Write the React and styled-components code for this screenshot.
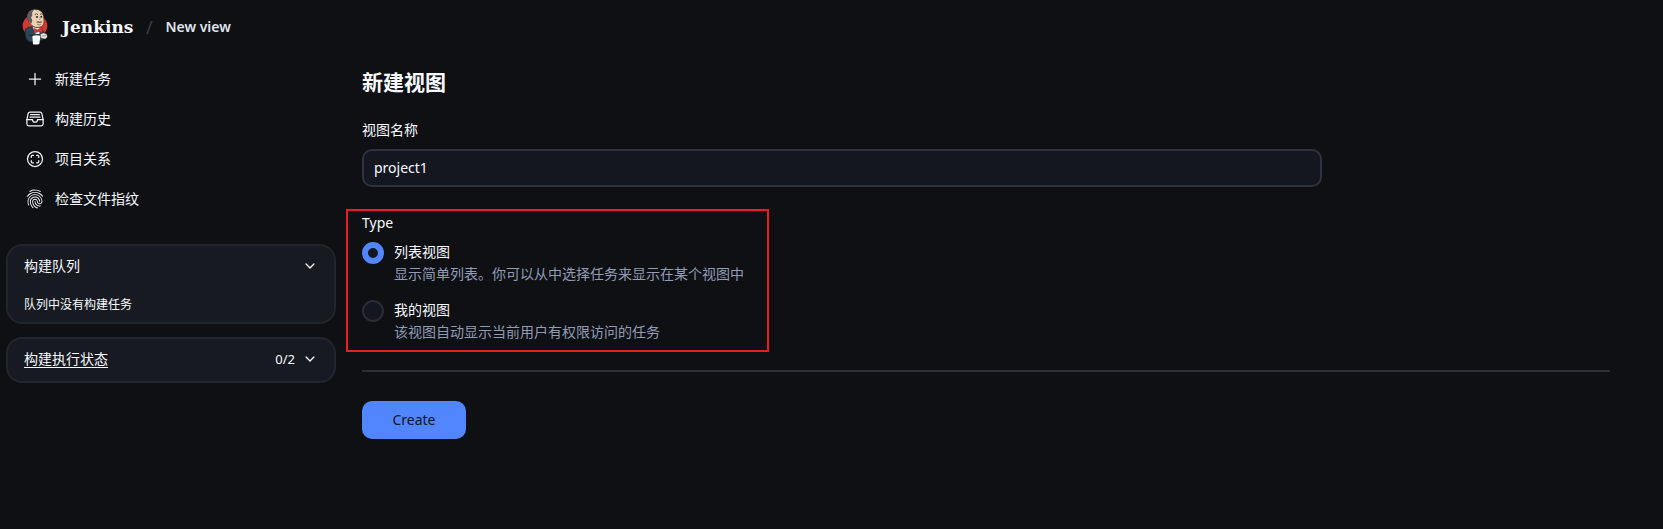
import React, { useState } from "react";
import styled, { createGlobalStyle } from "styled-components";
import {
  IoAddOutline,
  IoChevronDownOutline,
  IoFileTrayFullOutline,
  IoFingerPrintOutline,
  IoScanCircleOutline,
} from "react-icons/io5";

const GlobalStyle = createGlobalStyle`
  * {
    box-sizing: border-box;
  }

  body {
    margin: 0;
    background-color: #0f1014;
    color: #f8faff;
    font-family: "Noto Sans", "Noto Sans CJK SC", sans-serif;
    font-size: 14px;
    line-height: 20px;
  }

  button,
  input {
    font: inherit;
    color: inherit;
  }

  a {
    color: inherit;
    text-decoration: none;
  }
`;

const Header = styled.header`
  display: flex;
  align-items: center;
  height: 54px;
  padding: 0 22px;
`;

const HomeLink = styled.a`
  display: flex;
  align-items: center;
  gap: 14px;
  font-family: "DejaVu Serif", serif;
  font-size: 17px;
  font-weight: 700;
`;

const Separator = styled.span`
  width: 32px;
  text-align: center;
  font-size: 18px;
  color: #3a3e4a;
`;

const Crumb = styled.a`
  font-size: 14px;
  font-weight: 600;
  color: #dfe3ec;
`;

const Layout = styled.div`
  display: grid;
  grid-template-columns: 342px 1fr;
`;

const Sidebar = styled.aside`
  padding: 5px 6px;
`;

const Tasks = styled.nav`
  display: flex;
  flex-direction: column;
  margin-bottom: 25px;
`;

const TaskLink = styled.a`
  display: flex;
  align-items: center;
  gap: 10px;
  height: 40px;
  padding: 0 19px;

  svg {
    width: 20px;
    height: 20px;
    color: #f0f2f8;
  }
`;

const Card = styled.section`
  margin-bottom: 13px;
  border: 2px solid #21252d;
  border-radius: 16px;
  background-color: #171a21;
`;

const CardHeader = styled.div`
  display: flex;
  align-items: center;
  height: 42px;
  padding: 0 17px 2px 16px;
`;

const CardTitle = styled.a`
  margin-right: auto;
  text-decoration: ${(props) => (props.$underlined ? "underline" : "none")};
  text-underline-offset: 3px;
`;

const CardCount = styled.span`
  font-size: 13px;
`;

const CollapseButton = styled.button`
  display: flex;
  margin-left: 8px;
  padding: 0;
  border: 0;
  background: none;

  svg {
    width: 14px;
    height: 14px;
  }
`;

const CardBody = styled.div`
  padding: 7px 16px;
  font-size: 12px;
`;

const Main = styled.main`
  padding: 15px 53px 16px 20px;
`;

const Title = styled.h1`
  margin: 0 0 25px;
  font-size: 21px;
  line-height: 26px;
  font-weight: 700;
`;

const FieldLabel = styled.label`
  display: block;
  margin-bottom: 9px;
`;

const TextInput = styled.input`
  display: block;
  width: 100%;
  max-width: 960px;
  height: 38px;
  padding: 0 10px 2px;
  border: 2px solid #2f333d;
  border-radius: 10px;
  background-color: #14171f;
  outline: none;
`;

const Highlight = styled.div`
  width: fit-content;
  margin: 22px 0 18px -16px;
  padding: 2px 23px 6px 14px;
  border: 2px solid #ed1c24;
`;

const TypeGroup = styled.fieldset`
  display: flex;
  flex-direction: column;
  gap: 14px;
  margin: 0;
  padding: 0;
  border: 0;
`;

const TypeLegend = styled.legend`
  padding: 0;
  margin-bottom: 9px;
`;

const Option = styled.label`
  display: flex;
  gap: 10px;
`;

const Radio = styled.input`
  appearance: none;
  flex: none;
  width: 22px;
  height: 22px;
  margin: 0;
  border: 2px solid #2a2d36;
  border-radius: 50%;
  background-color: #14171f;

  &:checked {
    border: 6px solid #5286ff;
  }
`;

const OptionName = styled.span`
  display: block;
`;

const OptionHelp = styled.span`
  display: block;
  line-height: 24px;
  color: #929cb6;
`;

const Divider = styled.hr`
  height: 2px;
  margin: 0 0 29px;
  border: 0;
  background-color: #2c2e38;
`;

const CreateButton = styled.button`
  min-width: 104px;
  height: 38px;
  padding: 0 16px;
  border: 0;
  border-radius: 10px;
  background-color: #5286ff;
  color: #10141f;
`;

const tasks = [
  { name: "新建任务", icon: IoAddOutline },
  { name: "构建历史", icon: IoFileTrayFullOutline },
  { name: "项目关系", icon: IoScanCircleOutline },
  { name: "检查文件指纹", icon: IoFingerPrintOutline },
];

const viewTypes = [
  {
    id: "list",
    name: "列表视图",
    help: "显示简单列表。你可以从中选择任务来显示在某个视图中",
  },
  {
    id: "my",
    name: "我的视图",
    help: "该视图自动显示当前用户有权限访问的任务",
  },
];

function JenkinsLogo() {
  return (
    <svg width="26" height="36" viewBox="66 26 78 108" aria-hidden="true">
      <ellipse cx="105" cy="76" rx="37" ry="34" fill="#d33833" />
      <path d="M76 86 Q88 78 98 80 L128 90 Q134 98 130 119 L90 125 Q77 120 76 106 Z" fill="#2c4756" stroke="#14222b" strokeWidth="2" />
      <path d="M98 80 L106 100 L118 102 L121 84 Z" fill="#e9edf0" />
      <path d="M83 52 Q80 30 104 27 Q128 27 131 48 L132 64 Q132 77 119 81 Q104 84 96 76 Q86 68 83 52 Z" fill="#ebd0b2" stroke="#2b2320" strokeWidth="2" />
      <path d="M83 56 Q76 34 102 28 Q94 36 97 46 L93 51 L97 60 L94 70 Q84 64 83 56 Z" fill="#5c5a5c" />
      <path d="M104 43 Q109 38 114 43 M120 42 Q125 38 129 43" fill="none" stroke="#5b5049" strokeWidth="3" />
      <circle cx="111" cy="50" r="3" fill="#231f20" />
      <circle cx="124" cy="49" r="3" fill="#231f20" />
      <path d="M118 50 Q124 56 118 59" fill="none" stroke="#a57f63" strokeWidth="2" />
      <path d="M108 66 Q114 60 119 64 Q124 61 127 66 Q118 70 108 66 Z" fill="#6f5548" />
      <path d="M112 72 Q118 76 123 71" fill="none" stroke="#8c3b35" strokeWidth="2" />
      <path d="M101 84 L112 88 L127 81 L128 97 L114 94 L104 99 Z" fill="#d33833" stroke="#811c18" strokeWidth="1" />
      <path d="M86 103 Q100 109 122 102" fill="none" stroke="#14222b" strokeWidth="3" />
      <path d="M97 107 Q108 103 121 106 L118 131 Q110 134 99 132 Z" fill="#fff" />
      <path d="M121 102 L130 98 L140 101 L142 110 L136 116 L123 113 Z" fill="#e9e5e2" stroke="#4a4545" strokeWidth="1" />
      <path d="M126 107 L138 106" stroke="#777" strokeWidth="2" />
    </svg>
  );
}

function SidebarCard({ title, href, count, children }) {
  return (
    <Card>
      <CardHeader>
        <CardTitle href={href} $underlined={!children}>
          {title}
        </CardTitle>
        {count && <CardCount>{count}</CardCount>}
        <CollapseButton type="button" aria-label={title}>
          <IoChevronDownOutline />
        </CollapseButton>
      </CardHeader>
      {children && <CardBody>{children}</CardBody>}
    </Card>
  );
}

export default function App() {
  const [name, setName] = useState("project1");
  const [type, setType] = useState("list");

  return (
    <>
      <GlobalStyle />
      <Header>
        <HomeLink href="#">
          <JenkinsLogo />
          Jenkins
        </HomeLink>
        <Separator>/</Separator>
        <Crumb href="#new">New view</Crumb>
      </Header>
      <Layout>
        <Sidebar>
          <Tasks>
            {tasks.map(({ name, icon: Icon }) => (
              <TaskLink href="#" key={name}>
                <Icon />
                {name}
              </TaskLink>
            ))}
          </Tasks>
          <SidebarCard title="构建队列" href="#queue">
            队列中没有构建任务
          </SidebarCard>
          <SidebarCard title="构建执行状态" href="#computer" count="0/2" />
        </Sidebar>
        <Main>
          <Title>新建视图</Title>
          <form onSubmit={(e) => e.preventDefault()}>
            <FieldLabel htmlFor="name">视图名称</FieldLabel>
            <TextInput
              id="name"
              type="text"
              value={name}
              onChange={(e) => setName(e.target.value)}
            />
            <Highlight>
              <TypeGroup>
                <TypeLegend>Type</TypeLegend>
                {viewTypes.map((view) => (
                  <Option key={view.id}>
                    <Radio
                      type="radio"
                      name="type"
                      checked={type === view.id}
                      onChange={() => setType(view.id)}
                    />
                    <span>
                      <OptionName>{view.name}</OptionName>
                      <OptionHelp>{view.help}</OptionHelp>
                    </span>
                  </Option>
                ))}
              </TypeGroup>
            </Highlight>
            <Divider />
            <CreateButton type="submit">Create</CreateButton>
          </form>
        </Main>
      </Layout>
    </>
  );
}
